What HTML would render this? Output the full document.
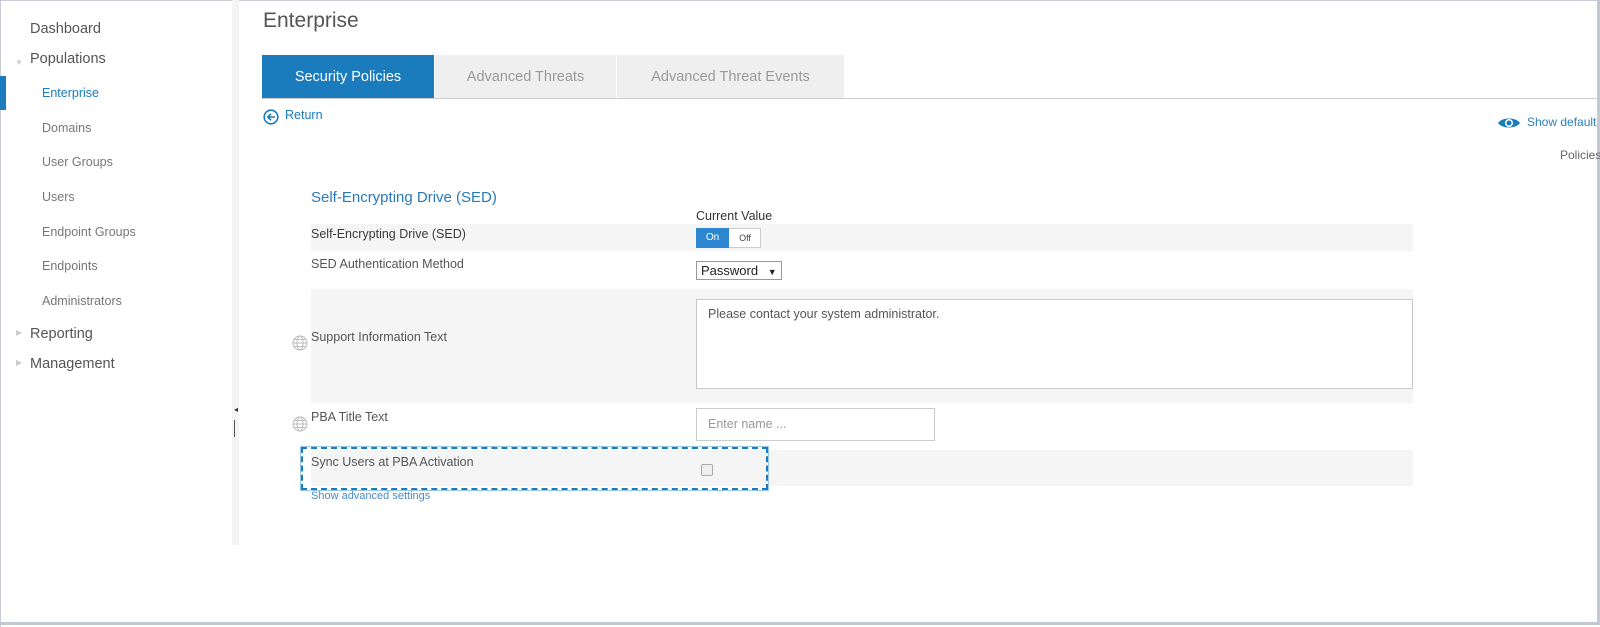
<!DOCTYPE html>
<html><head><style>
*{margin:0;padding:0;box-sizing:border-box}
body{width:1600px;height:627px;background:#fff;font-family:"Liberation Sans",sans-serif;position:relative;overflow:hidden;color:#444}
.a{position:absolute;white-space:nowrap}
.side{font-size:14.5px;color:#555}
.sub{font-size:12.5px;color:#777}
.lbl{font-size:12.5px;color:#3a3a3a}
.g{background:#f5f5f5}
.tab{position:absolute;top:55px;height:43px;background:#efefef;color:#9a9a9a;font-size:14.5px;display:flex;align-items:center;justify-content:center}
</style></head><body>
<div class="a" style="left:0;top:0;width:1600px;height:1px;background:#c8ccd4"></div>
<div class="a" style="left:0;top:0;width:1px;height:627px;background:#c8ccd4"></div>
<div class="a" style="left:1597px;top:0;width:3px;height:625px;background:#c3c9d3"></div>
<div class="a" style="left:0;top:622px;width:1600px;height:3px;background:#c3c9d3"></div>
<div class="a" style="left:232px;top:0;width:7px;height:545px;background:#f4f4f4"></div>
<div class="a" style="left:234px;top:405px;font-size:8px;color:#333">◂</div>
<div class="a" style="left:234px;top:420px;width:1px;height:17px;background:#555"></div>

<div class="a side" style="left:30px;top:21px">Dashboard</div>
<div class="a" style="left:15px;top:58px;font-size:8px;color:#ccc">▼</div>
<div class="a side" style="left:30px;top:51px">Populations</div>
<div class="a" style="left:0;top:76px;width:6px;height:34px;background:#1a7bbd"></div>
<div class="a sub" style="left:42px;top:86px;color:#1a7bbd">Enterprise</div>
<div class="a sub" style="left:42px;top:121px">Domains</div>
<div class="a sub" style="left:42px;top:155px">User Groups</div>
<div class="a sub" style="left:42px;top:190px">Users</div>
<div class="a sub" style="left:42px;top:225px">Endpoint Groups</div>
<div class="a sub" style="left:42px;top:259px">Endpoints</div>
<div class="a sub" style="left:42px;top:294px">Administrators</div>
<div class="a" style="left:16px;top:328px;font-size:8px;color:#ccc">▶</div>
<div class="a side" style="left:30px;top:326px">Reporting</div>
<div class="a" style="left:16px;top:358px;font-size:8px;color:#ccc">▶</div>
<div class="a side" style="left:30px;top:356px">Management</div>

<div class="a" style="left:263px;top:9px;font-size:21px;color:#555">Enterprise</div>
<div class="tab" style="left:262px;width:172px;background:#1a7bbd;color:#fff">Security Policies</div>
<div class="tab" style="left:435px;width:181px">Advanced Threats</div>
<div class="tab" style="left:617px;width:227px">Advanced Threat Events</div>
<div class="a" style="left:262px;top:98px;width:1336px;height:1px;background:#ccc"></div>

<svg class="a" style="left:263px;top:109px" width="16" height="16" viewBox="0 0 16 16"><circle cx="8" cy="8" r="6.8" fill="none" stroke="#1a7bbd" stroke-width="1.6"/><path d="M12 8H5M8 4.8L4.8 8 8 11.2" fill="none" stroke="#1a7bbd" stroke-width="1.6"/></svg>
<div class="a" style="left:285px;top:108px;font-size:12.5px;color:#1a7bbd">Return</div>

<svg class="a" style="left:1497px;top:116px" width="24" height="14" viewBox="0 0 24 14"><path d="M1 7C5 1 19 1 23 7 19 13 5 13 1 7Z" fill="#1a7bbd"/><circle cx="12" cy="7" r="4" fill="#fff"/><circle cx="12" cy="7" r="2.5" fill="#1a7bbd"/></svg>
<div class="a" style="left:1527px;top:115px;font-size:12px;color:#2a80c0">Show default settings</div>
<div class="a" style="left:1560px;top:148px;font-size:12px;color:#666">Policies</div>

<div class="a" style="left:311px;top:189px;font-size:15px;color:#2a7ab8">Self-Encrypting Drive (SED)</div>
<div class="a" style="left:696px;top:209px;font-size:12.5px;color:#333">Current Value</div>
<div class="a g" style="left:311px;top:224px;width:1102px;height:27px"></div>
<div class="a lbl" style="left:311px;top:227px">Self-Encrypting Drive (SED)</div>
<div class="a" style="left:696px;top:228px;width:65px;height:20px;border:1px solid #ccc;background:#fff"></div>
<div class="a" style="left:696px;top:228px;width:33px;height:20px;background:#2d86d0;color:#fff;font-size:10px;text-align:center;line-height:20px">On</div>
<div class="a" style="left:729px;top:228px;width:32px;height:20px;color:#444;font-size:9px;text-align:center;line-height:20px">Off</div>

<div class="a lbl" style="left:311px;top:257px;color:#555">SED Authentication Method</div>
<div class="a" style="left:696px;top:261px;width:86px;height:19px;border:1px solid #999;font-size:13px;color:#222;padding-left:4px;line-height:17px">Password <span style="font-size:9px;margin-left:6px">▼</span></div>

<div class="a g" style="left:311px;top:289px;width:1102px;height:114px"></div>
<div class="a lbl" style="left:311px;top:330px;color:#555">Support Information Text</div>
<div class="a" style="left:696px;top:299px;width:717px;height:90px;border:1px solid #c8c8c8;background:#fff;font-size:12.5px;color:#555;padding:7px 11px">Please contact your system administrator.</div>

<div class="a lbl" style="left:311px;top:410px;color:#555">PBA Title Text</div>
<div class="a" style="left:696px;top:408px;width:239px;height:33px;border:1px solid #ccc;font-size:12.5px;color:#999;padding-left:11px;line-height:31px">Enter name ...</div>

<svg class="a" style="left:292px;top:335px" width="16" height="16" viewBox="0 0 16 16" fill="none" stroke="#bbb" stroke-width="1"><circle cx="8" cy="8" r="7"/><ellipse cx="8" cy="8" rx="3" ry="7"/><path d="M1 8h14M2.5 4.5h11M2.5 11.5h11"/></svg>
<svg class="a" style="left:292px;top:416px" width="16" height="16" viewBox="0 0 16 16" fill="none" stroke="#bbb" stroke-width="1"><circle cx="8" cy="8" r="7"/><ellipse cx="8" cy="8" rx="3" ry="7"/><path d="M1 8h14M2.5 4.5h11M2.5 11.5h11"/></svg>

<div class="a g" style="left:311px;top:450px;width:1102px;height:36px"></div>
<div class="a" style="left:301px;top:447px;width:467px;height:43px;border:2px dashed #1a7bbd;outline:1px solid #9cc8e8"></div>
<div class="a lbl" style="left:311px;top:455px;color:#555">Sync Users at PBA Activation</div>
<div class="a" style="left:701px;top:464px;width:12px;height:12px;border:1px solid #aaa;border-radius:2px;background:#eee"></div>
<div class="a" style="left:311px;top:490px;font-size:11px;color:#4a8ac4">Show advanced settings</div>
</body></html>
